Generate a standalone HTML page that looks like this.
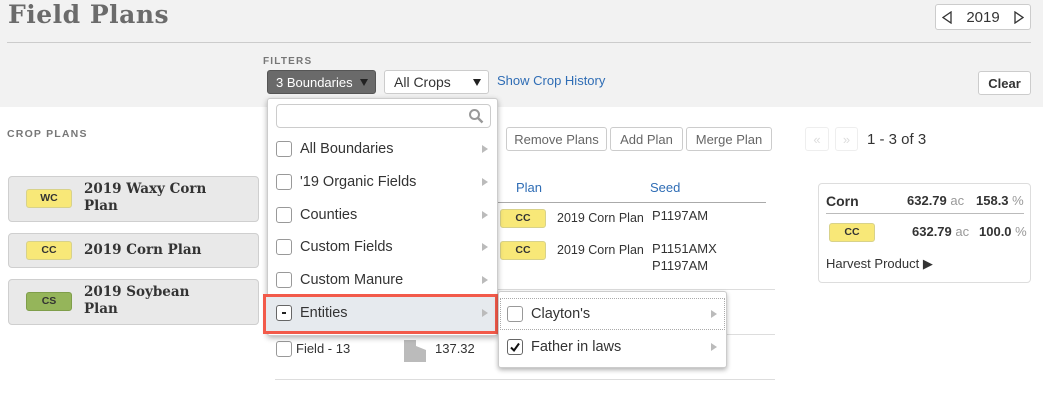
<!DOCTYPE html>
<html><head><meta charset="utf-8"><style>
*{box-sizing:border-box;margin:0;padding:0}
body{width:1043px;height:408px;overflow:hidden;background:#fff;font-family:"Liberation Sans",sans-serif;color:#333;position:relative;font-size:13px}
.a{position:absolute}
.hdr{left:0;top:0;width:1043px;height:107px;background:#f2f2f2}
.title{left:8px;top:0px;font-family:"DejaVu Serif",serif;font-weight:bold;font-size:25px;color:#6b6b6b;letter-spacing:0.5px}
.btn{position:absolute;border:1px solid #ccc;border-radius:3px;background:#fff;font-size:13px;display:flex;align-items:center;justify-content:center}
.lbl{font-size:10px;font-weight:bold;letter-spacing:1.2px;color:#777}
.card{position:absolute;left:8px;width:251px;background:#e9e9e9;border:1px solid #cfcfcf;border-radius:4px}
.badge{position:absolute;width:46px;height:19px;border:1px solid #d8d28a;background:#f8e878;border-radius:3px;font-size:10.5px;font-weight:bold;text-align:center;line-height:17px;color:#333}
.cn{position:absolute;font-family:"DejaVu Serif",serif;font-weight:bold;font-size:13.5px;color:#333;line-height:17px}
.cb{position:absolute;width:16px;height:16px;border:1px solid #999;border-radius:3px;background:#fff}
.it{position:absolute;font-size:14.5px;color:#333}
.ar{position:absolute;width:0;height:0;border-left:6px solid #bbb;border-top:4px solid transparent;border-bottom:4px solid transparent}
.hl{position:absolute;height:1px;background:#ccc}
</style></head><body>
<div class="a hdr"></div>
<div class="a title">Field Plans</div>
<div class="a" style="left:7px;top:42px;width:1024px;height:1px;background:#ccc"></div>
<div class="btn" style="left:935px;top:4px;width:96px;height:26px;justify-content:space-between;padding:0 6px;font-size:15px">
<svg width="10" height="13"><path d="M9 1L1 6.5 9 12Z" fill="none" stroke="#333" stroke-width="1.3"/></svg><span>2019</span><svg width="10" height="13"><path d="M1 1L9 6.5 1 12Z" fill="none" stroke="#333" stroke-width="1.3"/></svg></div>
<div class="a lbl" style="left:263px;top:56px">FILTERS</div>
<div class="btn" style="left:267px;top:70px;width:109px;height:24px;background:#6a6a6a;border-color:#555;color:#fff;justify-content:flex-start;padding-left:8px">3 Boundaries<span style="position:absolute;right:7px;top:8px;border-top:7px solid #222;border-left:4px solid transparent;border-right:4px solid transparent"></span></div>
<div class="btn" style="left:384px;top:70px;width:105px;height:24px;justify-content:flex-start;padding-left:9px;font-size:14px">All Crops<span style="position:absolute;right:7px;top:8px;border-top:7px solid #222;border-left:4px solid transparent;border-right:4px solid transparent"></span></div>
<div class="a" style="left:497px;top:73px;color:#2f6db5;font-size:13px">Show Crop History</div>
<div class="btn" style="left:978px;top:71px;width:53px;height:24px;font-weight:bold">Clear</div>

<div class="a lbl" style="left:7px;top:128px;font-size:10.5px">CROP PLANS</div>
<div class="card" style="top:176px;height:46px"></div>
<div class="badge" style="left:26px;top:189px">WC</div><div class="cn" style="left:84px;top:181px">2019 Waxy Corn<br>Plan</div>
<div class="card" style="top:233px;height:35px"></div>
<div class="badge" style="left:26px;top:241px">CC</div><div class="cn" style="left:84px;top:242px">2019 Corn Plan</div>
<div class="card" style="top:279px;height:46px"></div>
<div class="badge" style="left:26px;top:292px;background:#95b55a;border-color:#7f9e4a">CS</div><div class="cn" style="left:84px;top:284px">2019 Soybean<br>Plan</div>

<div class="btn" style="left:506px;top:127px;width:101px;height:24px;color:#666">Remove Plans</div>
<div class="btn" style="left:610px;top:127px;width:73px;height:24px;color:#666">Add Plan</div>
<div class="btn" style="left:686px;top:127px;width:86px;height:24px;color:#666">Merge Plan</div>
<div class="btn" style="left:805px;top:127px;width:24px;height:24px;border-color:#eee;color:#ddd">«</div>
<div class="btn" style="left:835px;top:127px;width:23px;height:24px;border-color:#eee;color:#ddd">»</div>
<div class="a" style="left:867px;top:131px;font-size:15px">1 - 3 of 3</div>

<div class="a" style="left:516px;top:180px;color:#2f6db5">Plan</div>
<div class="a" style="left:650px;top:180px;color:#2f6db5">Seed</div>
<div class="hl" style="left:490px;top:202px;width:276px;background:#aaa"></div>
<div class="badge" style="left:500px;top:209px">CC</div>
<div class="a" style="left:557px;top:211px;font-size:12.5px">2019 Corn Plan</div><div class="a" style="left:652px;top:208px">P1197AM</div>
<div class="badge" style="left:500px;top:241px">CC</div>
<div class="a" style="left:557px;top:243px;font-size:12.5px">2019 Corn Plan</div><div class="a" style="left:652px;top:240px;line-height:17px">P1151AMX<br>P1197AM</div>
<div class="hl" style="left:275px;top:289px;width:500px;background:#ddd"></div>
<div class="hl" style="left:275px;top:334px;width:500px;background:#ddd"></div>
<div class="cb" style="left:276px;top:341px"></div>
<div class="a" style="left:296px;top:341px">Field - 13</div>
<svg class="a" style="left:404px;top:340px" width="22" height="22"><path d="M0 0H12V6L22 10V22H0Z" fill="#bbb"/></svg>
<div class="a" style="left:435px;top:341px">137.32</div>
<div class="hl" style="left:275px;top:379px;width:500px;background:#ddd"></div>

<div class="a" style="left:818px;top:183px;width:213px;height:100px;border:1px solid #ddd;border-radius:4px"></div>
<div class="a" style="left:826px;top:193px;font-size:14px;font-weight:bold">Corn</div>
<div class="a" style="left:907px;top:193px;font-size:13px"><b>632.79</b> <span style="color:#999">ac</span></div>
<div class="a" style="left:976px;top:193px;font-size:13px"><b>158.3</b> <span style="color:#999">%</span></div>
<div class="hl" style="left:826px;top:213px;width:198px;background:#bbb"></div>
<div class="badge" style="left:829px;top:223px">CC</div>
<div class="a" style="left:912px;top:224px"><b>632.79</b> <span style="color:#999">ac</span></div>
<div class="a" style="left:979px;top:224px"><b>100.0</b> <span style="color:#999">%</span></div>
<div class="a" style="left:826px;top:256px">Harvest Product ▶</div>

<div class="a" style="left:267px;top:98px;width:231px;height:238px;background:#fff;border:1px solid #ccc;border-radius:3px;box-shadow:0 2px 6px rgba(0,0,0,.3)"></div>
<div class="a" style="left:276px;top:104px;width:215px;height:24px;border:1px solid #ccc;border-radius:4px"></div>
<svg class="a" style="left:468px;top:108px" width="16" height="16"><circle cx="6.5" cy="6.5" r="4.5" fill="none" stroke="#999" stroke-width="2"/><path d="M10 10l4.5 4.5" stroke="#999" stroke-width="2.4"/></svg>
<div class="cb" style="left:276px;top:141px"></div><div class="it" style="left:300px;top:141px">All Boundaries</div><div class="ar" style="left:482px;top:145px"></div>
<div class="cb" style="left:276px;top:174px"></div><div class="it" style="left:300px;top:174px">'19 Organic Fields</div><div class="ar" style="left:482px;top:178px"></div>
<div class="cb" style="left:276px;top:207px"></div><div class="it" style="left:300px;top:207px">Counties</div><div class="ar" style="left:482px;top:211px"></div>
<div class="cb" style="left:276px;top:239px"></div><div class="it" style="left:300px;top:239px">Custom Fields</div><div class="ar" style="left:482px;top:243px"></div>
<div class="cb" style="left:276px;top:272px"></div><div class="it" style="left:300px;top:272px">Custom Manure</div><div class="ar" style="left:482px;top:276px"></div>
<div class="a" style="left:263px;top:294px;width:235px;height:40px;border:3px solid #f25a4a;background:#e6eaee"></div>
<div class="cb" style="left:276px;top:305px;border-color:#666"><div style="position:absolute;left:5px;top:6px;width:4px;height:2px;background:#222"></div></div>
<div class="it" style="left:300px;top:305px">Entities</div><div class="ar" style="left:482px;top:309px"></div>

<div class="a" style="left:498px;top:291px;width:229px;height:77px;background:#fff;border:1px solid #ccc;border-radius:3px;box-shadow:0 2px 5px rgba(0,0,0,.3)"></div>
<div class="a" style="left:500px;top:298px;width:225px;height:32px;border:1px dotted #aaa"></div>
<div class="cb" style="left:507px;top:306px"></div><div class="it" style="left:531px;top:306px">Clayton's</div><div class="ar" style="left:711px;top:310px"></div>
<div class="cb" style="left:507px;top:339px;border-color:#666"><svg width="14" height="14" style="position:absolute;left:0;top:0"><path d="M3 7.5l3 3 5-7" fill="none" stroke="#111" stroke-width="2"/></svg></div>
<div class="it" style="left:531px;top:339px">Father in laws</div><div class="ar" style="left:711px;top:343px"></div>
</body></html>
